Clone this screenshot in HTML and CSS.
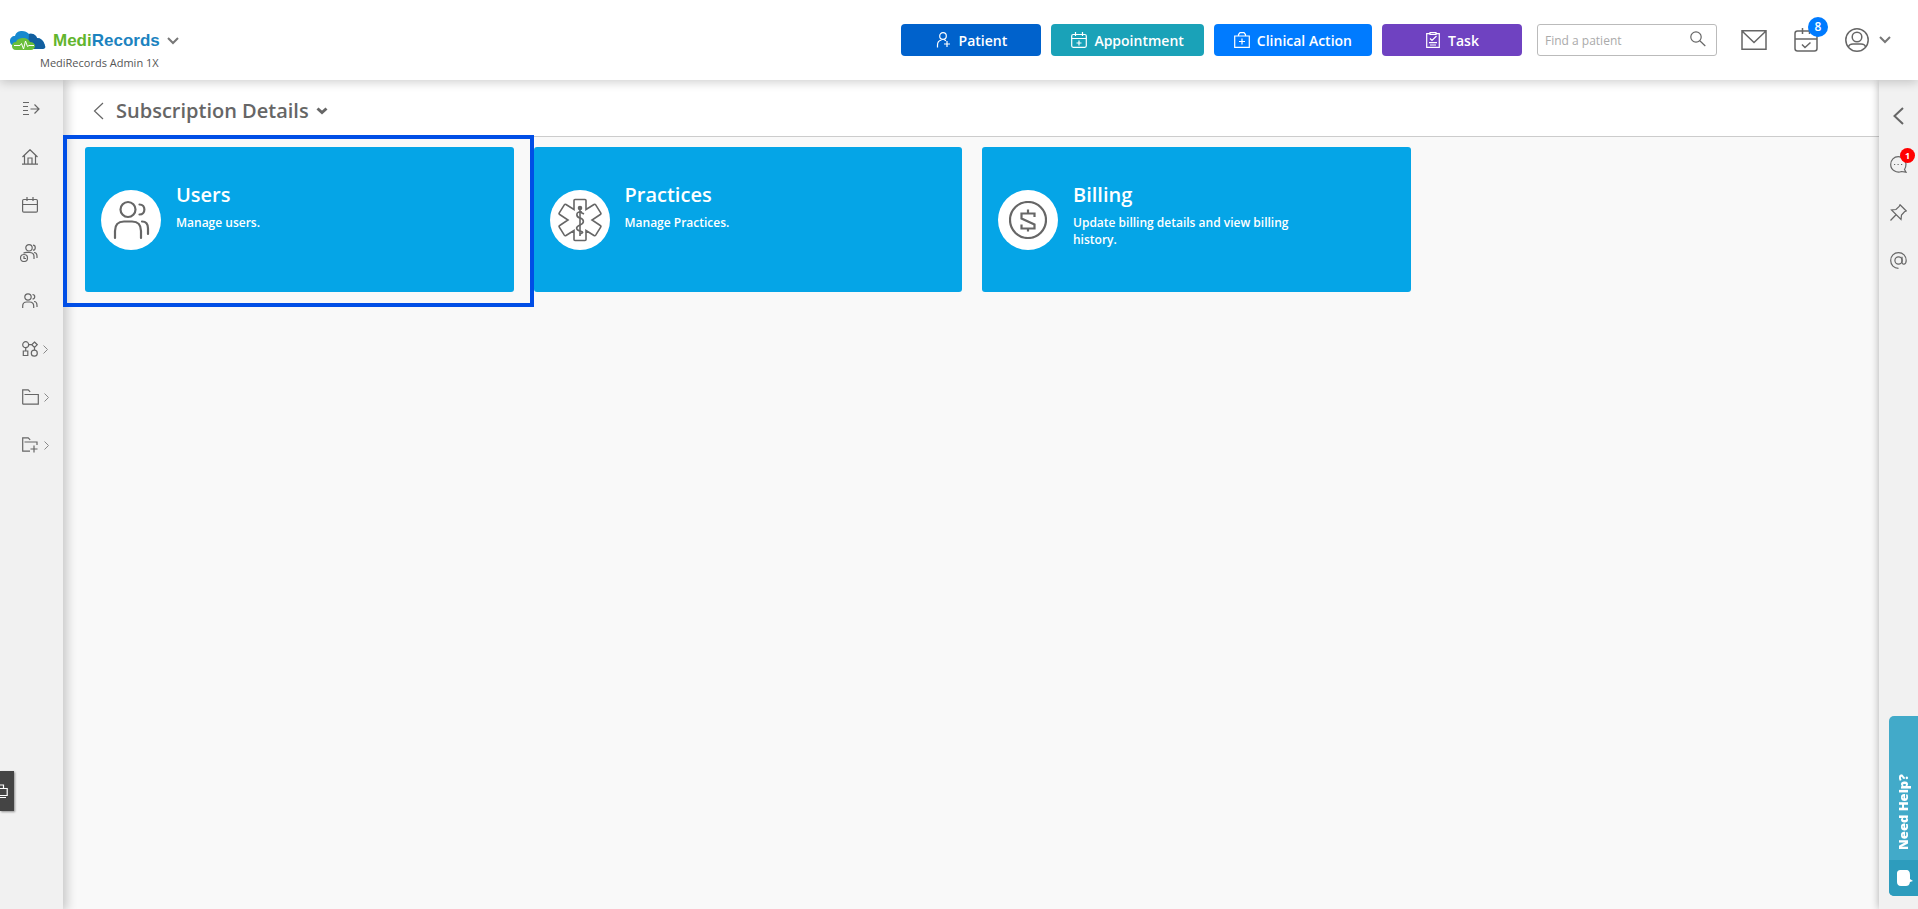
FILE: index.html
```html
<!DOCTYPE html>
<html lang="en">
<head>
  <meta charset="UTF-8" />
  <meta name="viewport" content="width=device-width, initial-scale=1.0" />
  <title>Subscription Details - MediRecords</title>
  <link rel="stylesheet" href="styles.css">
</head>
<body>
  <header class="topbar">
    <div class="brand">
      <button class="brand-button">
        <svg width="36" height="20" viewBox="0 0 36 20">
          <path d="M6 15C1 15 0 12 0 10c0-3 2-5 5-5C6 1 9 0 12 0c3 0 5 1 7 3 4-1 7 1 8 4 4 0 7 3 8 8 1 2-1 3-3 3H9z" fill="#1689cf"/>
          <path d="M19 3c4-1 7 1 8 4 4 0 7 3 8 8 1 2-1 3-3 3H18z" fill="#125f9f"/>
          <path d="M6 19c-3 0-4-2-4-4s1-4 4-4c1-3 4-4 7-4 4 0 6 2 7 4 3 0 5 2 5 4s-2 4-4 4z" fill="#6abf3a"/>
          <path d="M4 14.500h6l1.500-2 2 5.500 2-8 2 5.500 1.500-1h5" fill="none" stroke="#fff" stroke-width="1"/>
        </svg>
        <span class="brand-name"><span class="brand-medi">Medi</span>Records</span>
        <svg class="chevron" width="12" height="8" viewBox="0 0 12 8"><path d="M1 1l5 5 5-5"/></svg>
      </button>
      <span class="brand-user">MediRecords Admin 1X</span>
    </div>

    <div class="actions">
      <button class="action patient">
        <svg width="16" height="16" viewBox="0 0 16 16"><circle cx="7" cy="4" r="3.300"/><path d="M1.500 15.500V13c0-3 1.500-4.500 4-5M8 7.500l2 1.200M11 9v6M8 12h6"/></svg>
        Patient
      </button>
      <button class="action appointment">
        <svg width="16" height="16" viewBox="0 0 16 16"><rect x=".7" y="2.500" width="14.600" height="12.800" rx="1.500"/><path d="M.7 6.500h14.600M4.500 0v4M11.500 0v4M8 8.500v5M5.500 11h5"/></svg>
        Appointment
      </button>
      <button class="action clinical">
        <svg width="16" height="16" viewBox="0 0 16 16"><path d="M.7 4h14.600v11.300H.7zM4.500 4V2.500L6 .7h4l1.500 1.800V4M8 6.500v6M5 9.500h6"/></svg>
        Clinical Action
      </button>
      <button class="action task">
        <svg width="16" height="16" viewBox="0 0 16 16"><path d="M5 1.700H1.700v13.600h12.600V1.700H11M5 .7h6v1.800H5zM5 6.500l2 2 4.500-4.500M4 10.700h8M5 13h6"/></svg>
        Task
      </button>
    </div>

    <div class="search">
      <input type="text" aria-label="Find a patient" placeholder="Find a patient">
      <button aria-label="Search">
        <svg width="16" height="16" viewBox="0 0 16 16"><circle cx="6" cy="6" r="5.200"/><path d="M9.800 9.800l5.500 5.200"/></svg>
      </button>
    </div>

    <div class="tools">
      <button class="tool" aria-label="Messages">
        <svg width="26" height="20" viewBox="0 0 26 20"><path d="M1 .8h24v18.400H1zM1 1l12 11.500L25 1"/></svg>
      </button>
      <button class="tool" aria-label="Calendar">
        <svg width="24" height="24" viewBox="0 0 24 24"><rect x="1" y="3" width="22" height="20" rx="2.500"/><path d="M1 11h22M8.500 0v6M15.500 0v6M8 16.500l3 3 5.500-5"/></svg>
        <span class="badge">8</span>
      </button>
      <button class="tool account" aria-label="Account">
        <svg width="24" height="24" viewBox="0 0 24 24"><circle cx="12" cy="12" r="11.200"/><circle cx="12" cy="9" r="4.800"/><path d="M3.500 19c.5-2.500 2-3 4.500-3h8c2.500 0 4 .5 4.500 3"/></svg>
        <svg class="chevron" width="12" height="8" viewBox="0 0 12 8"><path d="M1 1l5 5 5-5"/></svg>
      </button>
    </div>
  </header>

  <div class="layout">
    <nav class="sidebar" aria-label="Main menu">
      <a href="#" aria-label="Expand menu">
        <svg width="18" height="16" viewBox="0 0 18 16"><path d="M1 1.500h6M1 5.500h5M1 9.500h5M1 13.500h6M8.500 8h8M12.500 3.500L17 8l-4.500 4.500"/></svg>
      </a>
      <a href="#" aria-label="Home">
        <svg width="16" height="16" viewBox="0 0 16 16"><path d="M.5 8L8 .7 15.500 8M2.500 6.500v8.500M13.500 6.500v8.500M0 15.200h16M6 15V9h4v6"/></svg>
      </a>
      <a href="#" aria-label="Appointments">
        <svg width="16" height="16" viewBox="0 0 16 16"><rect x=".6" y="2.500" width="14.800" height="12.700" rx="1.200"/><path d="M.5 7.500h15M5 0v4M11 0v4"/></svg>
      </a>
      <a class="wide-icon" href="#" aria-label="Waiting room">
        <svg width="18" height="18" viewBox="0 0 18 18"><circle cx="9" cy="3.800" r="3.200"/><circle cx="4" cy="14" r="3.500"/><path d="M4 12v2.500h2M3.500 9.200C5 8 7 8.500 9.500 8.500c3 0 4.500 1.500 4.500 4v2.500M13 1.200c3 0 3 5 0 5M14 8.500c2 0 3 1.500 3 4v1.500"/></svg>
      </a>
      <a href="#" aria-label="Patients">
        <svg width="16" height="16" viewBox="0 0 16 16"><circle cx="6" cy="4" r="3.200"/><path d="M.7 15v-2c0-2.500 1.500-4 4-4h3c2.500 0 4 1.500 4 4v2M10.500 1.500c3 0 3 4.500 0 4.500M12 8.500c2 0 3 1.500 3 4v1.500"/></svg>
      </a>
      <a href="#" aria-label="Workflows">
        <svg width="16" height="16" viewBox="0 0 16 16"><circle cx="3.700" cy="3.700" r="3"/><path d="M12.500 1l2.800 2.700-2.800 2.800-2.800-2.800zM6.700 3.700h3M3.700 6.700V10M12.500 6.500V9M1.300 10h4.500v4.500H1.300z"/><circle cx="12.300" cy="12.200" r="3"/></svg>
        <svg class="more" width="5" height="9" viewBox="0 0 5 9"><path d="M.5.500l4 4-4 4"/></svg>
      </a>
      <a href="#" aria-label="Files">
        <svg width="17" height="16" viewBox="0 0 17 16"><path d="M.7 15.200V.8h5.500l2 2M2.500 5.500h13.800v9.700H.7"/></svg>
        <svg class="more" width="5" height="9" viewBox="0 0 5 9"><path d="M.5.500l4 4-4 4"/></svg>
      </a>
      <a href="#" aria-label="Add files">
        <svg width="17" height="16" viewBox="0 0 17 16"><path d="M8 14.200H.7V.8h5.500l2 2M2.500 5h12.500v3M12 8.500v7M8.500 12h7"/></svg>
        <svg class="more" width="5" height="9" viewBox="0 0 5 9"><path d="M.5.500l4 4-4 4"/></svg>
      </a>
    </nav>

    <main class="content">
      <div class="title-bar">
        <a class="back" href="#" aria-label="Back">
          <svg width="11" height="18" viewBox="0 0 11 18"><path d="M10 1L1.500 9l8.500 8"/></svg>
        </a>
        <h1>Subscription Details</h1>
        <button class="title-menu" aria-label="Switch section">
          <svg width="12" height="8" viewBox="0 0 12 8"><path d="M1.500 1.500L6 5.500l4.500-4"/></svg>
        </button>
      </div>

      <div class="cards">
        <a class="card selected" href="#">
          <span class="card-icon">
            <svg width="38" height="40" viewBox="0 0 38 40"><circle cx="16" cy="9.500" r="7.500"/><path d="M3 38v-7c0-6 3-9.500 9-9.500h8c6 0 9 3.500 9 9.500v7M27.500 4.500c6.500 0 6.500 10 0 10M30 21.500c4 0 6 3 6 7V34" stroke-linecap="round"/></svg>
          </span>
          <span class="card-text">
            <span class="card-title">Users</span>
            <span class="card-description">Manage users.</span>
          </span>
        </a>
        <a class="card" href="#">
          <span class="card-icon">
            <svg class="thin" width="44" height="44" viewBox="0 0 44 44"><path d="M17 1.500h10q1 0 1 1v9l8-5q1-.6 1.700.4l5 8q.6 1-.4 1.600L34 22l8.300 5.500q1 .6.400 1.600l-5 8q-.7 1-1.700.4l-8-5v9q0 1-1 1H17q-1 0-1-1v-9l-8 5q-1 .6-1.700-.4l-5-8q-.6-1 .4-1.600L10 22l-8.300-5.500q-1-.6-.4-1.600l5-8Q7 5.900 8 6.500l8 5v-9q0-1 1-1z"/><path d="M22 10v28"/><path d="M24 14c-7-1-6 5-2 6s5 5 0 7-4 5 0 6 3 2 0 3M22 14l4 2"/><circle cx="22" cy="10" r="1.500" fill="#666"/></svg>
          </span>
          <span class="card-text">
            <span class="card-title">Practices</span>
            <span class="card-description">Manage Practices.</span>
          </span>
        </a>
        <a class="card" href="#">
          <span class="card-icon">
            <svg width="38" height="38" viewBox="0 0 38 38"><circle cx="19" cy="19" r="18"/><path d="M25.500 16v-3.500h-13v5l13 6v4h-13V23.500M19 8.500v4M19 27.500v3"/></svg>
          </span>
          <span class="card-text">
            <span class="card-title">Billing</span>
            <span class="card-description">Update billing details and view billing history.</span>
          </span>
        </a>
      </div>
    </main>

    <aside class="rail">
      <button aria-label="Open panel">
        <svg class="thick" width="11" height="18" viewBox="0 0 11 18"><path d="M10 1L1.500 9l8.500 8"/></svg>
      </button>
      <button aria-label="Chat">
        <svg width="17" height="17" viewBox="0 0 17 17"><path d="M14.500 13.500l1.500 2.700-4.500-.7c-5 2-10.800-1.500-10.800-7C.7 4 4 .7 8.300.7S16 4 16 8c0 2-.5 4-1.500 5.500zM4 8.500h1.200M7.500 8.500h1.200M11 8.500h1.200"/></svg>
        <span class="count">1</span>
      </button>
      <button aria-label="Pinned">
        <svg width="17" height="17" viewBox="0 0 17 17"><path d="M10 .8L16.300 7l-1.800.8-3 3.200-.5 4.500L1.500 6l4.500-.5 3.200-3zM5.800 11L.5 16.500"/></svg>
      </button>
      <button aria-label="Mentions">
        <svg width="17" height="17" viewBox="0 0 17 17"><circle cx="8.500" cy="8.500" r="3.600"/><path d="M12 4.800v5.500c0 3 4.200 2.500 4.200-1.800C16.200 4 13 .7 8.500.7S.7 4 .7 8.500s3.300 7.800 7.800 7.800"/></svg>
      </button>
    </aside>
  </div>

  <button class="screen-tab" aria-label="Share screen">
    <svg width="8" height="14" viewBox="0 0 8 14"><path d="M0 1h3.500v3M0 4.500h7.200v7H0M0 13.500h6"/></svg>
  </button>

  <button class="help-tab">
    <span class="help-text">Need Help?</span>
    <span class="help-icon">
      <svg width="16" height="18" viewBox="0 0 16 18"><path d="M4 1h5c3 0 4 2 4 5v4l3 2-3 1c-.5 3-2 4-4 4H4c-3 0-4-2-4-4V5c0-3 1-4 4-4z" fill="#fff"/></svg>
    </span>
  </button>
</body>
</html>
```
FILE: styles.css
```css
* {
  box-sizing: border-box;
}
body {
  margin: 0;
  min-height: 100vh;
  display: flex;
  flex-direction: column;
  font-family: "Open Sans", sans-serif;
  color: #666;
  background: #f9f9f9;
}
button {
  padding: 0;
  border: none;
  background: none;
  font-family: inherit;
  color: inherit;
  cursor: pointer;
}
a {
  color: inherit;
  text-decoration: none;
}
svg {
  display: block;
  flex: none;
  fill: none;
  stroke: #666;
  stroke-width: 1.2;
}

/* top bar */
.topbar {
  position: relative;
  z-index: 2;
  display: flex;
  align-items: center;
  height: 80px;
  padding: 0 27px 0 10px;
  background: #fff;
  box-shadow: 0 2px 10px rgba(0,0,0,0.2);
}
.brand {
  display: flex;
  flex-direction: column;
  padding-top: 22px;
  margin-right: auto;
}
.brand-button {
  display: flex;
  align-items: center;
  gap: 7px;
}
.brand-button svg {
  stroke: none;
}
.brand-name {
  font-family: "Liberation Sans", sans-serif;
  font-size: 17px;
  font-weight: bold;
  line-height: 24px;
  color: #1c83c0;
}
.brand-medi {
  color: #62b52e;
}
.chevron,
.brand-button .chevron {
  stroke: #777;
  stroke-width: 2;
}
.brand-user {
  padding-left: 30px;
  font-size: 11px;
  line-height: 20px;
  color: #555;
}
.actions {
  display: flex;
  gap: 10px;
}
.action {
  display: flex;
  align-items: center;
  justify-content: center;
  gap: 7px;
  min-width: 140px;
  height: 32px;
  padding: 0 20px;
  border-radius: 4px;
  font-size: 14px;
  font-weight: 600;
  color: #fff;
}
.action svg {
  stroke: #fff;
}
.patient {
  background: #0062cc;
}
.appointment {
  background: #1aa2b8;
}
.clinical {
  background: #007bff;
}
.task {
  background: #6f42c1;
}
.search {
  display: flex;
  align-items: center;
  width: 180px;
  height: 32px;
  margin-left: 15px;
  padding: 0 10px 0 7px;
  border: 1px solid #bbb;
  border-radius: 3px;
}
.search input {
  flex: 1;
  min-width: 0;
  padding: 0;
  border: none;
  outline: none;
  font-family: inherit;
  font-size: 12px;
  color: #666;
}
.search input::placeholder {
  color: #aaa;
}
.search button {
  padding-bottom: 3px;
}
.tools {
  display: flex;
  align-items: center;
  gap: 27px;
  margin-left: 24px;
}
.tool {
  position: relative;
  display: flex;
  align-items: center;
  gap: 10px;
}
.tool svg {
  stroke-width: 1.5;
}
.tool .chevron {
  stroke-width: 2;
}
.badge {
  position: absolute;
  top: -11px;
  right: -10px;
  width: 20px;
  height: 20px;
  border-radius: 50%;
  background: #007bff;
  color: #fff;
  font-size: 12px;
  font-weight: 600;
  line-height: 20px;
}

/* page */
.layout {
  flex: 1;
  display: flex;
}
.sidebar {
  z-index: 1;
  width: 63px;
  padding-top: 5px;
  background: #f1f1f1;
  box-shadow: 2px 0 10px 2px rgba(0,0,0,0.2);
}
.sidebar a {
  display: flex;
  align-items: center;
  gap: 5px;
  height: 48px;
  padding-left: 22px;
}
.sidebar .wide-icon {
  padding-left: 20px;
}
.sidebar .more {
  stroke: #888;
  stroke-width: 1;
}
.content {
  flex: 1;
}
.title-bar {
  display: flex;
  align-items: center;
  height: 57px;
  padding: 5px 0 0 30px;
  background: #fff;
  border-bottom: 1px solid #ccc;
}
.title-bar h1 {
  margin: 0 7px 0 12px;
  font-size: 20px;
  font-weight: 600;
  line-height: 28px;
}
.title-menu svg {
  stroke-width: 3;
}
.cards {
  display: grid;
  grid-template-columns: repeat(4, 1fr);
  gap: 20px;
  padding: 10px 20px 20px 22px;
}
.card {
  position: relative;
  display: flex;
  gap: 15px;
  min-height: 145px;
  padding: 34px 16px 20px;
  border-radius: 3px;
  background: #05a5e7;
  color: #fff;
}
.selected::after {
  content: "";
  position: absolute;
  z-index: 2;
  inset: -12px -20px -15px -22px;
  border: 4px solid #004ee6;
}
.card-icon {
  flex: none;
  display: flex;
  align-items: center;
  justify-content: center;
  width: 60px;
  height: 60px;
  margin-top: 9px;
  border-radius: 50%;
  background: #fff;
}
.card-icon svg {
  stroke-width: 2.2;
}
.card-icon .thin {
  stroke-width: 1.6;
}
.card-text {
  display: flex;
  flex-direction: column;
  gap: 5px;
  max-width: 240px;
}
.card-title {
  font-size: 20px;
  font-weight: 600;
  line-height: 28px;
}
.card-description {
  font-size: 12px;
  font-weight: 600;
  line-height: 17px;
}
.rail {
  z-index: 1;
  width: 39px;
  padding-top: 12px;
  background: #f1f1f1;
  box-shadow: 0 0 8px rgba(0,0,0,0.3);
}
.rail button {
  position: relative;
  display: flex;
  align-items: center;
  justify-content: center;
  width: 100%;
  height: 48px;
}
.rail .thick {
  stroke-width: 2;
}
.count {
  position: absolute;
  top: 8px;
  right: 3px;
  width: 15px;
  height: 15px;
  border-radius: 50%;
  background: #f00;
  color: #fff;
  font-size: 9px;
  font-weight: 700;
  line-height: 15px;
}

/* tabs stuck to the window edges */
.screen-tab {
  position: fixed;
  z-index: 3;
  left: 0;
  bottom: 98px;
  width: 14px;
  height: 40px;
  background: #444;
  box-shadow: 1px 1px 2px rgba(0,0,0,0.4);
}
.screen-tab svg {
  stroke: #fff;
}
.help-tab {
  position: fixed;
  z-index: 3;
  right: 0;
  bottom: 13px;
  display: flex;
  flex-direction: column;
  width: 29px;
  height: 180px;
  overflow: hidden;
  border-radius: 5px 0 0 5px;
  background: #42aac9;
  color: #fff;
}
.help-text {
  flex: 1;
  width: 100%;
  padding-top: 10px;
  writing-mode: vertical-rl;
  transform: rotate(180deg);
  text-align: left;
  font-size: 13px;
  font-weight: 800;
  line-height: 29px;
}
.help-icon {
  display: flex;
  align-items: center;
  width: 100%;
  height: 36px;
  padding-left: 8px;
  background: #2d9cbd;
}
.help-icon svg {
  stroke: none;
}
```
